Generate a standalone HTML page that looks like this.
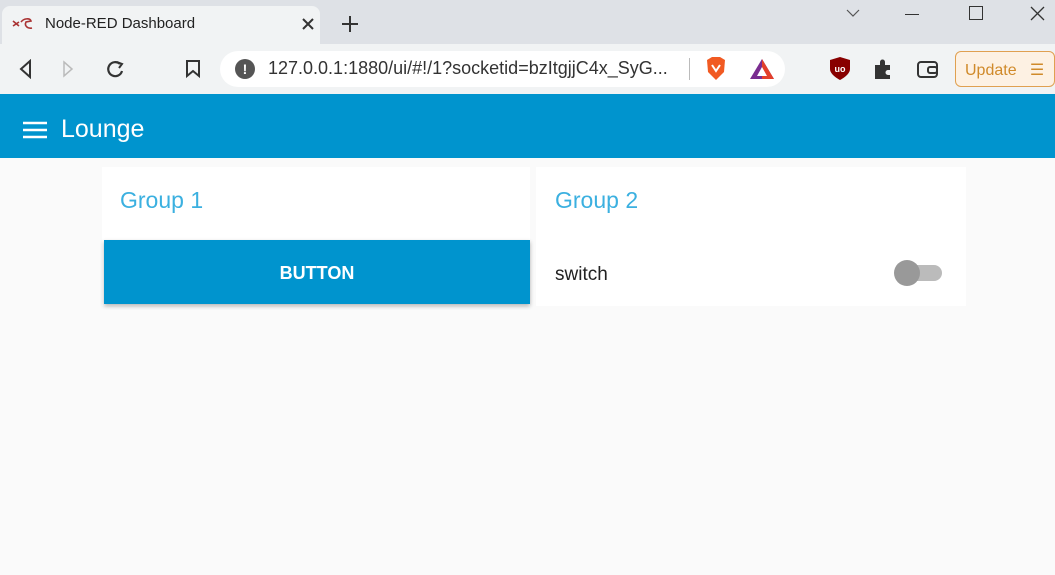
<!DOCTYPE html>
<html><head><style>
*{box-sizing:border-box;margin:0;padding:0}
body{width:1055px;height:575px;overflow:hidden;background:#fafafa;font-family:"Liberation Sans",sans-serif;position:relative}
.abs{position:absolute}
</style></head><body>
<div class="abs" style="left:0;top:0;width:1055px;height:44px;background:#dee1e6"></div>
<div class="abs" style="left:2px;top:6px;width:318px;height:40px;background:#f1f3f4;border-radius:8px 8px 0 0"></div>
<svg class="abs" style="left:12px;top:16px" width="22" height="16" viewBox="0 0 22 16"><path d="M1 10 L7 6 M1 5 L7 10 M9 6 C12 2 18 2 19 5 L14 6 C12 10 16 13 20 12" stroke="#a33" stroke-width="1.6" fill="none"/></svg>
<div class="abs" style="left:45px;top:15px;font-size:15px;color:#222">Node-RED Dashboard</div>
<svg class="abs" style="left:302px;top:18px" width="12" height="12"><path d="M1 1L11 11M11 1L1 11" stroke="#333" stroke-width="2"/></svg>
<svg class="abs" style="left:342px;top:16px" width="16" height="16"><path d="M8 0V16M0 8H16" stroke="#333" stroke-width="2"/></svg>
<svg class="abs" style="left:846px;top:9px" width="14" height="8"><path d="M1 1L7 7L13 1" stroke="#555" stroke-width="1.2" fill="none"/></svg>
<div class="abs" style="left:905px;top:14px;width:14px;height:1px;background:#333"></div>
<div class="abs" style="left:969px;top:6px;width:14px;height:14px;border:1.5px solid #333"></div>
<svg class="abs" style="left:1030px;top:6px" width="15" height="15"><path d="M1 1L14 14M14 1L1 14" stroke="#333" stroke-width="1.3"/></svg>
<div class="abs" style="left:0;top:44px;width:1055px;height:50px;background:#f1f3f4"></div>
<svg class="abs" style="left:18px;top:59px" width="120" height="20"><path d="M12 2 L3 10 L12 18Z" stroke="#333" stroke-width="2" fill="none"/><path d="M46 3 L54 10 L46 17Z" stroke="#bbb" stroke-width="1.5" fill="none"/><path d="M102 5 A7 7 0 1 0 104 12" stroke="#333" stroke-width="2.2" fill="none"/><path d="M99 3 L104 5 L101 9" stroke="#333" stroke-width="2" fill="none"/></svg>
<svg class="abs" style="left:185px;top:59px" width="16" height="20"><path d="M2 2 H14 V17 L8 12 L2 17Z" stroke="#333" stroke-width="2" fill="none"/></svg>
<div class="abs" style="left:220px;top:51px;width:565px;height:36px;background:#fff;border-radius:18px"></div>
<div class="abs" style="left:235px;top:59px;width:20px;height:20px;border-radius:50%;background:#555;color:#fff;font-size:14px;font-weight:bold;text-align:center;line-height:20px">!</div>
<div class="abs" style="left:268px;top:58px;font-size:18px;color:#333">127.0.0.1:1880/ui/#!/1?socketid=bzItgjjC4x_SyG...</div>
<div class="abs" style="left:689px;top:58px;width:1px;height:22px;background:#bbb"></div>
<svg class="abs" style="left:704px;top:56px" width="24" height="26"><path d="M3 4 L8 1 H16 L21 4 L20 16 L12 24 L4 16Z" fill="#f15a22"/><path d="M8 9 L12 15 L16 9" stroke="#fff" stroke-width="2" fill="none"/></svg>
<svg class="abs" style="left:749px;top:58px" width="26" height="22"><path d="M13 1 L25 21 H1Z" fill="#7a2c90"/><path d="M13 1 L25 21 H13Z" fill="#e3402b"/><path d="M13 9 L18 18 H8Z" fill="#fff"/></svg>
<svg class="abs" style="left:829px;top:57px" width="22" height="24"><path d="M1 3 L11 0 L21 3 V12 C21 18 11 23 11 23 C11 23 1 18 1 12Z" fill="#800"/><text x="11" y="15" font-size="9" fill="#fff" text-anchor="middle" font-family="Liberation Sans" font-weight="bold">uo</text></svg>
<svg class="abs" style="left:872px;top:58px" width="22" height="22"><path d="M3 7H8V4A2.5 2.5 0 0 1 13 4V7H18V12H16A2.5 2.5 0 0 0 16 17H18V21H3Z" fill="#333"/></svg>
<svg class="abs" style="left:917px;top:60px" width="22" height="19"><rect x="1" y="2" width="19" height="15" rx="3" stroke="#333" stroke-width="2" fill="none"/><rect x="11" y="7" width="9" height="6" rx="2" stroke="#333" stroke-width="2" fill="#f1f3f4"/></svg>
<div class="abs" style="left:955px;top:51px;width:100px;height:36px;border:1px solid #e0a050;background:#fdf1e3;border-radius:6px;color:#d08a2a;font-size:16px;padding:8px 0 0 9px">Update&nbsp;&nbsp;&nbsp;☰</div>
<div class="abs" style="left:0;top:94px;width:1055px;height:64px;background:#0094ce"></div>
<svg class="abs" style="left:23px;top:121px" width="24" height="18"><path d="M0 2H24M0 9H24M0 16H24" stroke="#fff" stroke-width="2.4"/></svg>
<div class="abs" style="left:61px;top:115px;font-size:25px;color:#fff">Lounge</div>
<div class="abs" style="left:102px;top:167px;width:428px;height:139px;background:#fff"></div>
<div class="abs" style="left:536px;top:167px;width:430px;height:139px;background:#fff"></div>
<div class="abs" style="left:120px;top:187px;font-size:23px;color:#3bb0e0">Group 1</div>
<div class="abs" style="left:555px;top:187px;font-size:23px;color:#3bb0e0">Group 2</div>
<div class="abs" style="left:104px;top:240px;width:426px;height:64px;background:#0094ce;box-shadow:0 2px 4px rgba(0,0,0,.3);color:#fff;font-size:18px;font-weight:bold;text-align:center;line-height:66px">BUTTON</div>
<div class="abs" style="left:555px;top:264px;font-size:19px;color:#222">switch</div>
<div class="abs" style="left:904px;top:265px;width:38px;height:16px;border-radius:8px;background:#bbb"></div>
<div class="abs" style="left:894px;top:260px;width:26px;height:26px;border-radius:50%;background:#999"></div>
</body></html>
